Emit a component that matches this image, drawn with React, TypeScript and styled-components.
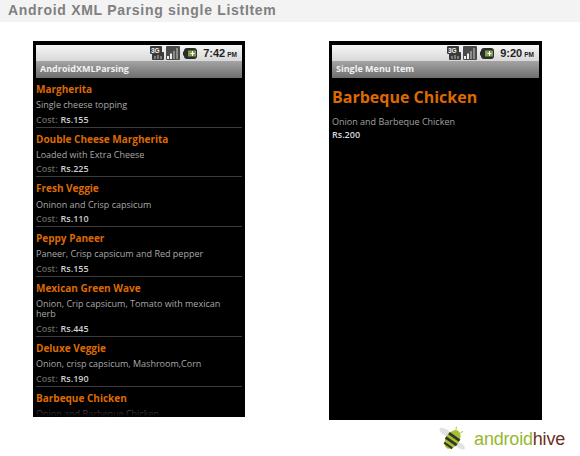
import React from "react";
import styled, { createGlobalStyle } from "styled-components";

const GlobalStyle = createGlobalStyle`
  html, body {
    margin: 0;
    background: #fff;
  }
`;

const Page = styled.div`
  width: 580px;
  height: 456px;
  overflow: hidden;
  display: flex;
  flex-direction: column;
`;

const Banner = styled.h1`
  margin: 0;
  height: 22px;
  padding-left: 8px;
  background: #f3f3f3;
  color: #808080;
  font: bold 14px/21px "Liberation Sans", sans-serif;
  letter-spacing: 0.7px;
`;

const Shots = styled.div`
  display: flex;
  align-items: flex-start;
  gap: 84px;
  padding: 19px 0 0 33px;
`;

const Phone = styled.div<{ $height: number; $width: number }>`
  position: relative;
  width: ${(p) => p.$width}px;
  height: ${(p) => p.$height}px;
  box-sizing: border-box;
  padding: 4px 3px 0;
  background: #000;
  overflow: hidden;
  font-family: "Open Sans", sans-serif;
`;

const ListFade = styled.div`
  position: absolute;
  left: 0;
  right: 0;
  bottom: 0;
  height: 9px;
  background: linear-gradient(rgba(0, 0, 0, 0.45), #000);
`;

const StatusBar = styled.div`
  height: 16px;
  padding-right: 5px;
  display: flex;
  align-items: center;
  justify-content: flex-end;
  gap: 2px;
  background: linear-gradient(#f6f6f6, #e4e4e4 60%, #d8d8d8);
`;

const Clock = styled.span`
  margin-left: 4px;
  color: #222;
  font: bold 11px/1 "Liberation Sans", sans-serif;

  small {
    font-size: 6.5px;
    margin-left: 2px;
  }
`;

const TitleBar = styled.div`
  height: 17px;
  padding-left: 4px;
  background: linear-gradient(#a4a4a4, #6e6e6e);
  color: #f2f2f2;
  font-size: 9px;
  font-weight: 700;
  line-height: 16px;
`;

const List = styled.ul`
  margin: 0;
  padding: 0;
  list-style: none;
`;

const Item = styled.li`
  padding: 3px 0 1px;
  border-bottom: 1px solid #3c3c3c;
  &:last-child {
    border-bottom: none;
  }
`;

const ItemName = styled.div`
  color: #dc6a00;
  font-size: 10px;
  font-weight: 700;
  line-height: 16px;
`;

const ItemDesc = styled.div`
  color: #a8a8a8;
  font-size: 9px;
  line-height: 10.5px;
  padding: 3.2px 0 2px;
`;

const ItemCost = styled.div`
  color: #666;
  font-size: 9px;
  font-weight: 600;
  line-height: 13px;

  b {
    color: #cfcfcf;
    margin-left: 3px;
    font-weight: 600;
  }
`;

const Detail = styled.div`
  padding: 5px 0 0;
`;

const DetailName = styled.div`
  color: #dc6a00;
  font-size: 16px;
  font-weight: 700;
  line-height: 28px;
`;

const DetailDesc = styled.div`
  margin-top: 4px;
  color: #a0a0a0;
  font-size: 9px;
  line-height: 13px;
`;

const DetailPrice = styled.div`
  color: #d8d8d8;
  font-size: 9px;
  font-weight: 600;
  line-height: 13px;
`;

const Brand = styled.div`
  display: flex;
  align-items: center;
  justify-content: flex-end;
  gap: 8px;
  padding: 5px 15px 0 0;
  font: 18px/24px "Liberation Sans", sans-serif;
  color: #97b82e;
  letter-spacing: -0.2px;

  b {
    font-weight: 400;
    color: #6b2f22;
  }
`;

const pizzas = [
  { name: "Margherita", desc: "Single cheese topping", cost: "Rs.155" },
  { name: "Double Cheese Margherita", desc: "Loaded with Extra Cheese", cost: "Rs.225" },
  { name: "Fresh Veggie", desc: "Oninon and Crisp capsicum", cost: "Rs.110" },
  { name: "Peppy Paneer", desc: "Paneer, Crisp capsicum and Red pepper", cost: "Rs.155" },
  { name: "Mexican Green Wave", desc: "Onion, Crip capsicum, Tomato with mexican herb", cost: "Rs.445" },
  { name: "Deluxe Veggie", desc: "Onion, crisp capsicum, Mashroom,Corn", cost: "Rs.190" },
  { name: "Barbeque Chicken", desc: "Onion and Barbeque Chicken", cost: "Rs.200" },
];

function StatusIcons() {
  return (
    <>
      <svg width="14" height="14" viewBox="0 0 14 14">
        <rect x="0" y="0" width="12" height="8" rx="1" fill="#3a3a3a" />
        <rect x="2" y="6" width="12" height="8" rx="1" fill="#3a3a3a" />
        <text x="1" y="6.500" fontSize="6.500" fontWeight="700" fontFamily="Liberation Sans, sans-serif" fill="#f4f4f4">3G</text>
        <path d="M5 10v3M8 9v4M11 10v3" stroke="#bbb" />
      </svg>
      <svg width="14" height="14" viewBox="0 0 14 14">
        <rect width="14" height="14" rx="1" fill="#4a4a4a" />
        <rect x="1" y="10" width="2" height="3" fill="#eee" />
        <rect x="4" y="7.500" width="2" height="5.500" fill="#eee" />
        <rect x="7" y="5" width="2" height="8" fill="#8c8c8c" />
        <rect x="10" y="2" width="2" height="11" fill="#8c8c8c" />
      </svg>
      <svg width="14" height="11" viewBox="0 0 14 11" style={{ marginLeft: 1 }}>
        <rect x="1" y="0" width="13" height="11" rx="3" fill="#2c2c2c" />
        <rect x="0" y="3.500" width="2" height="4" fill="#2c2c2c" />
        <rect x="5" y="2.500" width="8" height="6" fill="#7f9e4e" />
        <path d="M9.500 3v5M7.500 5.500h4" stroke="#fff" />
      </svg>
    </>
  );
}

function Bee() {
  return (
    <svg width="27" height="27" viewBox="0 0 30 30">
      <ellipse cx="7" cy="8" rx="7.500" ry="3.500" fill="#e2e2e2" transform="rotate(35 7 8)" />
      <ellipse cx="23" cy="23" rx="6.500" ry="3" fill="#e2e2e2" transform="rotate(30 23 23)" />
      <g transform="rotate(35 15 16)">
        <path d="M12 5 10.500 2M18 5l1.500-3" stroke="#a4c232" fill="none" />
        <ellipse cx="15" cy="16" rx="7.500" ry="11.500" fill="#a4c232" />
        <path d="M7.800 11h14.400v3.200H7.800zM7.500 17h15v3.200h-15zM9.500 23h11v2.500h-11z" fill="#35352a" />
      </g>
    </svg>
  );
}

export default function App() {
  return (
    <Page>
      <GlobalStyle />
      <Banner>Android XML Parsing single ListItem</Banner>
      <Shots>
        <Phone $width={212} $height={376}>
          <StatusBar>
            <StatusIcons />
            <Clock>7:42<small>PM</small></Clock>
          </StatusBar>
          <TitleBar>AndroidXMLParsing</TitleBar>
          <List>
            {pizzas.map((p) => (
              <Item key={p.name}>
                <ItemName>{p.name}</ItemName>
                <ItemDesc>{p.desc}</ItemDesc>
                <ItemCost>Cost:<b>{p.cost}</b></ItemCost>
              </Item>
            ))}
          </List>
          <ListFade />
        </Phone>
        <Phone $width={213} $height={379}>
          <StatusBar>
            <StatusIcons />
            <Clock>9:20<small>PM</small></Clock>
          </StatusBar>
          <TitleBar>Single Menu Item</TitleBar>
          <Detail>
            <DetailName>Barbeque Chicken</DetailName>
            <DetailDesc>Onion and Barbeque Chicken</DetailDesc>
            <DetailPrice>Rs.200</DetailPrice>
          </Detail>
        </Phone>
      </Shots>
      <Brand>
        <Bee />
        <span>android<b>hive</b></span>
      </Brand>
    </Page>
  );
}
